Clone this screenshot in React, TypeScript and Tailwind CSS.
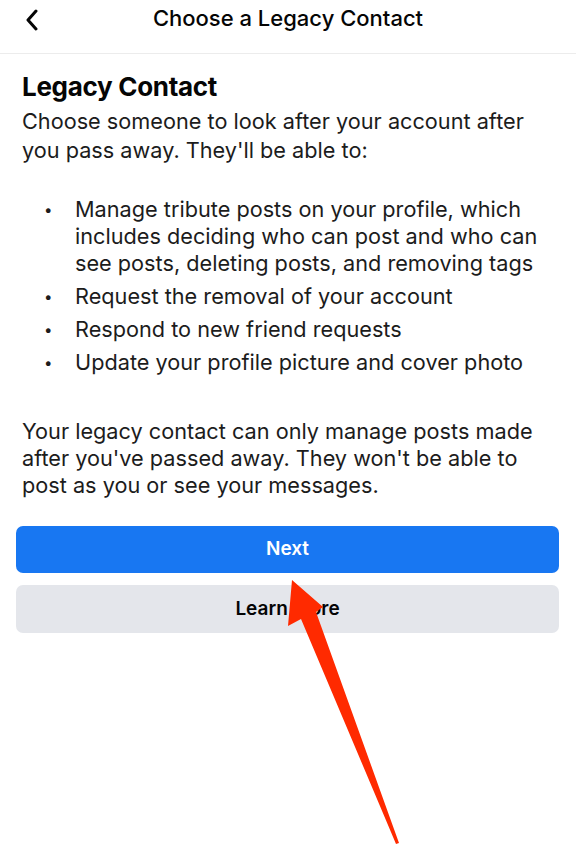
import React from "react";

const items = [
  "Manage tribute posts on your profile, which includes deciding who can post and who can see posts, deleting posts, and removing tags",
  "Request the removal of your account",
  "Respond to new friend requests",
  "Update your profile picture and cover photo",
];

export default function App() {
  return (
    <div className="relative w-[576px] h-[853px] bg-white text-[#050505] overflow-hidden" style={{ fontFamily: "Inter, Roboto, sans-serif" }}>
      <div className="relative h-[54px] flex items-center justify-center border-b border-[#ececec]">
        <svg className="absolute left-[24px] top-[9px]" width="16" height="22" viewBox="0 0 16 22">
          <path d="M12 2 L4 11 L12 20" fill="none" stroke="#050505" strokeWidth="3" strokeLinecap="round" strokeLinejoin="round" />
        </svg>
        <div className="text-[22px] font-medium -mt-[16px]">Choose a Legacy Contact</div>
      </div>
      <div className="px-[22px] pt-[16px]">
        <h1 className="text-[26px] font-bold leading-[34px] tracking-[-0.3px]">Legacy Contact</h1>
        <p className="text-[21.7px] leading-[29px] mt-[3px] text-[#1c1c1c]">
          Choose someone to look after your account after you pass away. They'll be able to:
        </p>
        <ul className="mt-[31px] flex flex-col gap-[6px] text-[21.7px] leading-[27px] text-[#1c1c1c]">
          {items.map((t) => (
            <li key={t} className="flex">
              <span className="w-[53px] pl-[22px] shrink-0 text-[15px] leading-[27px]">•</span>
              <span className="pr-[10px]">{t}</span>
            </li>
          ))}
        </ul>
        <p className="mt-[42px] text-[21.7px] leading-[27px] text-[#1c1c1c]">
          Your legacy contact can only manage posts made after you've passed away. They won't be able to post as you or see your messages.
        </p>
      </div>
      <div className="px-[16px] mt-[27px] flex flex-col gap-[12px] pr-[17px]">
        <div className="h-[47px] rounded-[7px] bg-[#1877F2] text-white flex items-center justify-center text-[19px] font-semibold">Next</div>
        <div className="h-[48px] rounded-[7px] bg-[#E4E6EB] text-[#050505] flex items-center justify-center text-[19px] font-semibold">Learn more</div>
      </div>
      <svg className="absolute left-0 top-0" width="576" height="853" viewBox="0 0 576 853">
        <polygon points="292,580 323,607 316,612 399,843 396,844 301,619 288,626" fill="#FF2A00" />
      </svg>
    </div>
  );
}
